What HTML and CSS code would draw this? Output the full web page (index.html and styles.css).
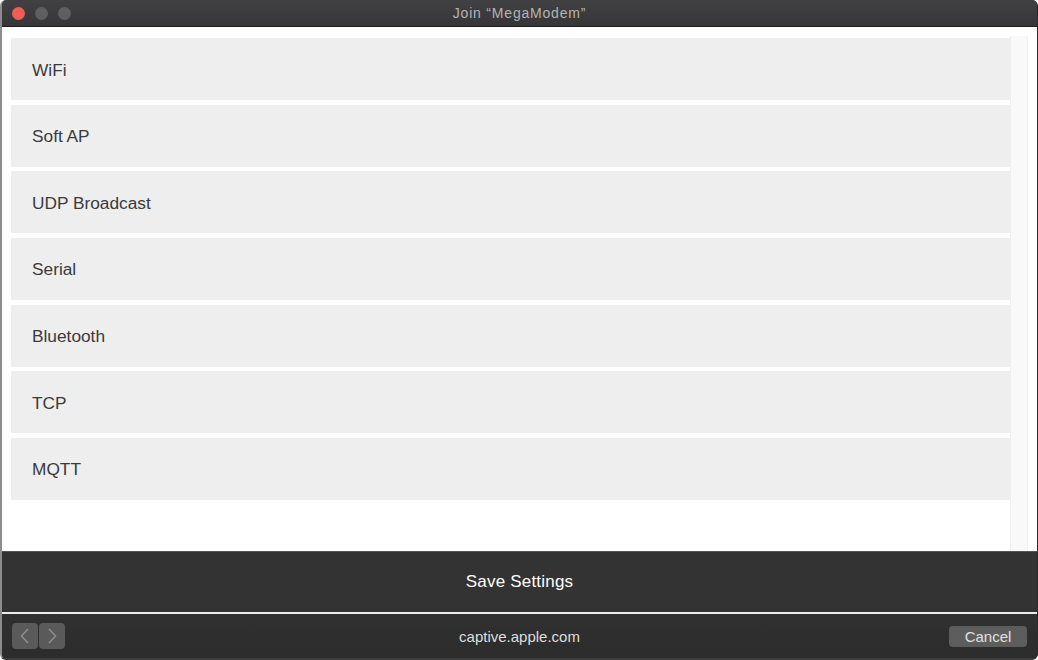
FILE: index.html
```html
<!DOCTYPE html>
<html>
<head>
<meta charset="utf-8">
<link rel="stylesheet" href="styles.css">
</head>
<body>
<div class="window">
  <div class="titlebar">
    <div class="lights">
      <span class="light red"></span>
      <span class="light gray"></span>
      <span class="light gray"></span>
    </div>
    <div class="title">Join “MegaModem”</div>
  </div>
  <div class="content">
    <div class="list">
      <div class="row">WiFi</div>
      <div class="row">Soft AP</div>
      <div class="row">UDP Broadcast</div>
      <div class="row">Serial</div>
      <div class="row">Bluetooth</div>
      <div class="row">TCP</div>
      <div class="row">MQTT</div>
    </div>
    <div class="track"></div>
  </div>
  <div class="savebar">Save Settings</div>
  <div class="toolbar">
    <div class="nav">
      <span class="navbtn"><svg width="26" height="26" viewBox="0 0 26 26"><path d="M16 6 L9.5 13 L16 20" fill="none" stroke="#8a8a8a" stroke-width="1.6"/></svg></span>
      <span class="navbtn"><svg width="26" height="26" viewBox="0 0 26 26"><path d="M10 6 L16.5 13 L10 20" fill="none" stroke="#8a8a8a" stroke-width="1.6"/></svg></span>
    </div>
    <div class="url">captive.apple.com</div>
    <div class="cancel">Cancel</div>
  </div>
</div>
</body>
</html>
```
FILE: styles.css
```css
* { box-sizing: border-box; }
html, body { margin: 0; padding: 0; background: #ffffff; }
body { font-family: "Liberation Sans", Arial, sans-serif; }

.window {
  width: 1038px;
  height: 660px;
  display: flex;
  flex-direction: column;
  background: #2e2e2e;
  border-radius: 6px;
  overflow: hidden;
  border-left: 2px solid #8c8c8c;
  border-right: 1px solid #2a2a2a;
  border-bottom: 2px solid #3c3c3c;
}

.titlebar {
  height: 27px;
  flex: none;
  position: relative;
  background: linear-gradient(#414143, #363638);
  border-bottom: 1px solid #1e1e1e;
  display: flex;
  align-items: center;
}
.lights { display: flex; gap: 10px; padding-left: 10px; }
.light { width: 13px; height: 13px; border-radius: 50%; display: block; }
.light.red { background: #ee5e56; }
.light.gray { background: #5f5f61; }
.title {
  position: absolute;
  left: 0; right: 0; top: 0;
  line-height: 27px;
  text-align: center;
  color: #b4b4b4;
  font-size: 14px;
  letter-spacing: 0.8px;
}

.content {
  height: 524px;
  flex: none;
  background: #ffffff;
  display: flex;
  padding: 9px 9px 0 9px;
}
.list {
  flex: 1;
  padding-top: 2px;
  display: flex;
  flex-direction: column;
  gap: 4.67px;
}
.row {
  height: 62px;
  flex: none;
  background: #eeeeee;
  display: flex;
  align-items: center;
  padding-left: 21px;
  padding-top: 2px;
  font-size: 17.3px;
  color: #3a3a3a;
}
.track {
  width: 18px;
  background: #f9f9f9;
  border-left: 1px solid #eeeeee;
  border-right: 1px solid #f1f1f1;
}

.savebar {
  height: 63px;
  flex: none;
  background: #333333;
  border-top: 1px solid #555;
  color: #ffffff;
  font-size: 17px;
  letter-spacing: 0.2px;
  display: flex;
  align-items: center;
  justify-content: center;
  border-bottom: 2px solid #ececec;
}

.toolbar {
  height: 44px;
  flex: none;
  background: linear-gradient(#303030, #2c2c2c);
  display: flex;
  align-items: center;
  padding: 0 10px 0 10px;
  position: relative;
}
.nav { display: flex; gap: 1px; }
.navbtn {
  width: 26px;
  height: 26px;
  background: #5a5a5a;
  border-radius: 4px;
  display: block;
}
.navbtn svg { display: block; }
.url {
  position: absolute;
  left: 0; right: 0;
  text-align: center;
  color: #dedede;
  font-size: 15px;
}
.cancel {
  margin-left: auto;
  width: 78px;
  height: 21px;
  background: #5d5d5d;
  border-radius: 4px;
  color: #e0e0e0;
  font-size: 15px;
  display: flex;
  align-items: center;
  justify-content: center;
  margin-top: 1px;
}
```
